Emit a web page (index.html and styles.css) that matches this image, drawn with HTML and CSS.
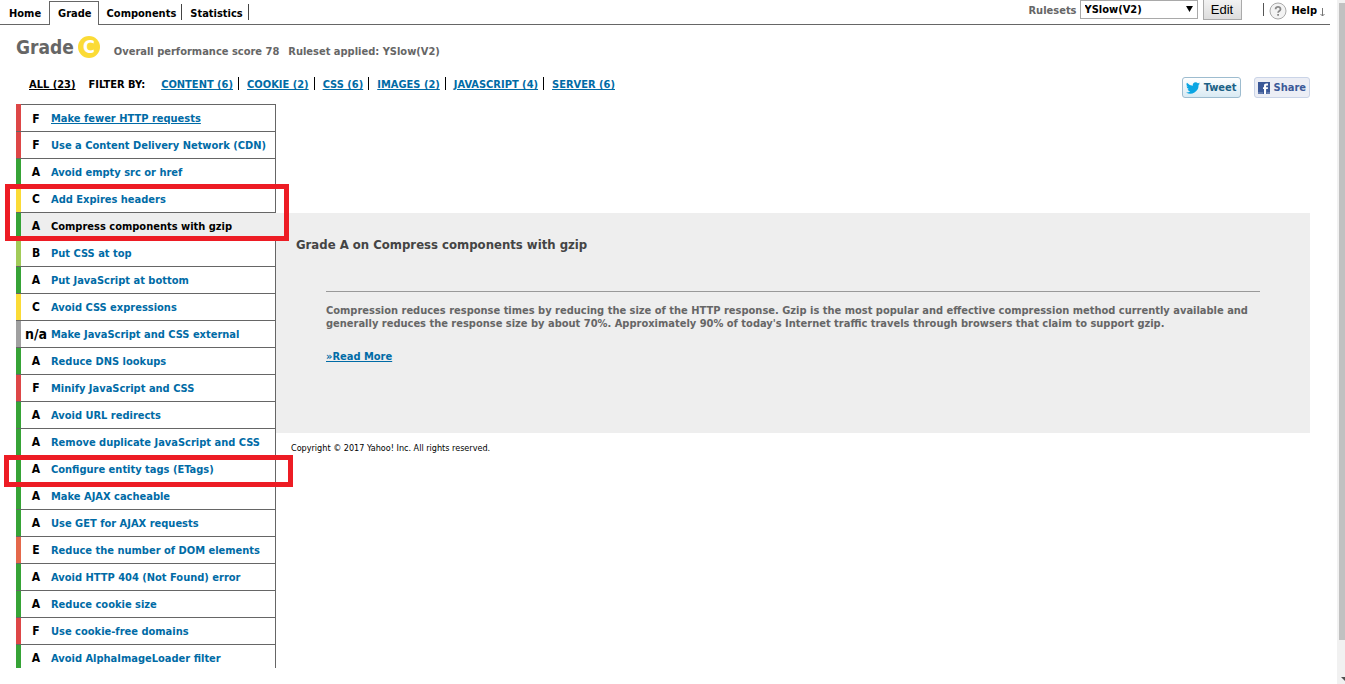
FILE: index.html
```html
<!DOCTYPE html>
<html lang="en">
<head>
<meta charset="utf-8">
<title>YSlow</title>
<link rel="stylesheet" href="styles.css">
</head>
<body>
<div class="page">
  <header class="topbar">
    <nav class="tabs">
      <a class="tab" href="#home">Home</a>
      <a class="tab tab-active" href="#grade">Grade</a>
      <a class="tab tab-divided" href="#components">Components</a>
      <a class="tab tab-divided" href="#statistics">Statistics</a>
    </nav>
    <form class="tools">
      <label for="rulesets">Rulesets</label>
      <span class="select-wrap">
        <select id="rulesets"><option>YSlow(V2)</option></select>
        <svg class="caret" viewBox="0 0 8 7" aria-hidden="true"><path d="M0 0h8L4 7z"/></svg>
      </span>
      <button class="edit" type="button">Edit</button>
      <a class="help" href="#help">
        <svg class="help-icon" viewBox="0 0 18 18" aria-hidden="true"><circle cx="9" cy="9" r="8"/><path d="M6.6 7.2c0-3.1 4.9-3.1 4.9 0 0 1.800-2.400 1.800-2.400 3.600M9.100 12.100v1.700"/></svg>
        <span>Help</span>
        <svg class="help-arrow" viewBox="0 0 5 9" aria-hidden="true"><path d="M2.500 0v8M.5 6l2 2 2-2"/></svg>
      </a>
    </form>
  </header>

  <section class="summary">
    <h1>Grade</h1>
    <span class="badge">C</span>
    <p class="score">Overall performance score 78</p>
    <p>Ruleset applied: YSlow(V2)</p>
  </section>

  <section class="filterbar">
    <nav class="filters">
      <a class="filter-all" href="#all">ALL (23)</a>
      <span class="filter-label">FILTER BY:</span>
      <a href="#content">CONTENT (6)</a><i></i>
      <a href="#cookie">COOKIE (2)</a><i></i>
      <a href="#css">CSS (6)</a><i></i>
      <a href="#images">IMAGES (2)</a><i></i>
      <a href="#javascript">JAVASCRIPT (4)</a><i></i>
      <a href="#server">SERVER (6)</a>
    </nav>
    <div class="share">
      <a class="share-btn tweet" href="#tweet"><svg viewBox="0 0 24 20" aria-hidden="true"><path fill="#0aa5e3" d="M24 2.400a10 10 0 0 1-2.800.8A5 5 0 0 0 23.300.5a10 10 0 0 1-3.100 1.200 4.900 4.900 0 0 0-8.400 4.500A14 14 0 0 1 1.700 1a4.900 4.900 0 0 0 1.500 6.600A5 5 0 0 1 1 7a4.900 4.900 0 0 0 3.900 4.900 5 5 0 0 1-2.200.1 4.900 4.900 0 0 0 4.600 3.400A10 10 0 0 1 0 17.500 14 14 0 0 0 21.500 5a10 10 0 0 0 2.500-2.600z"/></svg>Tweet</a>
      <a class="share-btn fb" href="#share"><svg viewBox="0 0 12 12" aria-hidden="true"><path fill="#3b5998" d="M0 0h12v12H0z"/><path fill="#fff" d="M6 12V7H5V5.200h1V4c0-1.600.8-2.400 2.300-2.400H10v1.800H9c-.7 0-.9.200-.9.800v1H10L9.800 7H8.100v5z"/><path fill="#8b9dc3" d="M0 10.500h5v1H0zM9 10.500h3v1H9z"/></svg>Share</a>
    </div>
  </section>

  <main class="results">
    <ul class="rules">
      <li class="f"><b>F</b><a class="hovered" href="#r1">Make fewer HTTP requests</a></li>
      <li class="f"><b>F</b><a href="#r2">Use a Content Delivery Network (CDN)</a></li>
      <li class="a"><b>A</b><a href="#r3">Avoid empty src or href</a></li>
      <li class="c"><b>C</b><a href="#r4">Add Expires headers</a></li>
      <li class="a selected"><b>A</b><a href="#r5">Compress components with gzip</a></li>
      <li class="b"><b>B</b><a href="#r6">Put CSS at top</a></li>
      <li class="a"><b>A</b><a href="#r7">Put JavaScript at bottom</a></li>
      <li class="c"><b>C</b><a href="#r8">Avoid CSS expressions</a></li>
      <li class="na"><b>n/a</b><a href="#r9">Make JavaScript and CSS external</a></li>
      <li class="a"><b>A</b><a href="#r10">Reduce DNS lookups</a></li>
      <li class="f"><b>F</b><a href="#r11">Minify JavaScript and CSS</a></li>
      <li class="a"><b>A</b><a href="#r12">Avoid URL redirects</a></li>
      <li class="a"><b>A</b><a href="#r13">Remove duplicate JavaScript and CSS</a></li>
      <li class="a"><b>A</b><a href="#r14">Configure entity tags (ETags)</a></li>
      <li class="a"><b>A</b><a href="#r15">Make AJAX cacheable</a></li>
      <li class="a"><b>A</b><a href="#r16">Use GET for AJAX requests</a></li>
      <li class="e"><b>E</b><a href="#r17">Reduce the number of DOM elements</a></li>
      <li class="a"><b>A</b><a href="#r18">Avoid HTTP 404 (Not Found) error</a></li>
      <li class="a"><b>A</b><a href="#r19">Reduce cookie size</a></li>
      <li class="f"><b>F</b><a href="#r20">Use cookie-free domains</a></li>
      <li class="a"><b>A</b><a href="#r21">Avoid AlphaImageLoader filter</a></li>
    </ul>
    <div class="detail">
      <article class="panel">
        <h2>Grade A on Compress components with gzip</h2>
        <div class="explain">
          <p>Compression reduces response times by reducing the size of the HTTP response. Gzip is the most popular and effective compression method currently available and generally reduces the response size by about 70%. Approximately 90% of today's Internet traffic travels through browsers that claim to support gzip.</p>
          <a href="#more">»Read More</a>
        </div>
      </article>
      <footer>Copyright © 2017 Yahoo! Inc. All rights reserved.</footer>
    </div>
    <div class="mark mark-gzip"></div>
    <div class="mark mark-etags"></div>
  </main>
</div>
<div class="scrollbar"><div class="thumb"></div><svg viewBox="0 0 4 4" aria-hidden="true"><path d="M0 0h4v4z"/></svg></div>
</body>
</html>
```
FILE: styles.css
```css
* { box-sizing: border-box; }
body {
  margin: 0;
  height: 100vh;
  display: flex;
  overflow: hidden;
  background: #fff;
  color: #000;
  font: bold 11px/13px "DejaVu Sans Condensed", "DejaVu Sans", sans-serif;
}
h1, h2, p, ul { margin: 0; padding: 0; }
a { color: #006ba6; }
.page { flex: 1; min-width: 0; display: flex; flex-direction: column; padding-bottom: 16px; }

.topbar {
  display: flex;
  justify-content: space-between;
  height: 25px;
  margin-right: 7px;
  border-bottom: 1px solid #666;
}
.tabs { display: flex; padding-top: 1px; }
.tab { position: relative; padding: 6px 8px 0 9px; height: 23px; color: #000; text-decoration: none; }
.tab-active { height: 24px; padding: 5px 6px 0 8px; border: 1px solid #666; border-bottom: 0; background: #fff; box-shadow: 0 1px #fff; }
.tab-divided { padding: 6px 6px 0 8px; }
.tab-divided::after { content: ""; position: absolute; right: 0; top: 3px; height: 16px; border-right: 1px solid #444; }
.tools { display: flex; align-items: flex-start; color: #666; }
.tools label { padding: 4px 3px 0 0; }
.select-wrap { position: relative; }
.tools select {
  appearance: none;
  display: block;
  width: 118px;
  height: 19px;
  padding: 0 4px;
  border: 1px solid #a9a9a9;
  border-radius: 0;
  background: #fff;
  color: #000;
  font: inherit;
}
.caret { position: absolute; right: 5px; top: 6px; width: 7px; height: 6px; }
.edit {
  width: 39px;
  height: 20px;
  margin: 0 21px 0 5px;
  padding: 0;
  border: 1px solid #aaa;
  border-top: 0;
  background: linear-gradient(#f2f2f2, #ddd);
  color: #000;
  font: 13px/18px "Liberation Sans", Arial, sans-serif;
}
.help { display: flex; align-items: flex-start; color: #000; text-decoration: none; }
.help::before { content: ""; height: 13px; margin: 3px 5px 0 0; border-left: 1px solid #555; }
.help span { padding: 4px 3px 0 5px; }
.help-icon { width: 18px; height: 18px; margin-top: 2px; fill: #f3f3f3; stroke: #aaa; }
.help-icon path { fill: none; stroke: #888; stroke-width: 1.800; }
.help-arrow { width: 5px; height: 9px; margin: 8px 5px 0 0; fill: none; stroke: #777; }

.summary { display: flex; align-items: center; height: 44px; padding-left: 16px; color: #666; }
.summary h1 { font-size: 19px; line-height: 24px; }
.badge { width: 22px; height: 22px; margin: 0 14px 0 4px; border-radius: 50%; background: #fbdb36; color: #fff; text-align: center; font-size: 18px; line-height: 22px; }
.summary p { padding-top: 8px; }
.score { margin-right: 9px; }

.filterbar { display: flex; justify-content: space-between; height: 35px; padding: 8px 27px 0 29px; }
.filters { display: flex; align-items: flex-start; }
.filters a, .filter-label { padding-top: 1px; margin-right: 5px; }
.filters .filter-all { color: #000; margin-right: 13px; }
.filters .filter-label { margin-right: 16px; }
.filters i { height: 13px; margin-right: 8px; border-left: 1px solid #000; }
.share { display: flex; gap: 13px; }
.share-btn { display: flex; align-items: center; gap: 4px; height: 21px; padding: 0 3px; border: 1px solid #bcd; border-radius: 3px; text-decoration: none; }
.tweet { border-color: #9dbccf; background: linear-gradient(#fff, #d9eaf3); color: #1b6186; }
.tweet svg { width: 14px; height: 12px; }
.fb { border-color: #cad4e7; background: #eceef5; color: #3b5998; }
.fb svg { width: 12px; height: 12px; }

.results { position: relative; flex: 1; min-height: 0; display: flex; padding-left: 16px; }
.rules { width: 260px; overflow: hidden; list-style: none; }
.rules li { --grade: #36a336; display: flex; align-items: center; height: 27px; border-bottom: 1px solid #666; }
.rules li::before { content: ""; width: 5px; align-self: stretch; background: var(--grade); }
.rules .b { --grade: #a2cb58; }
.rules .c { --grade: #fbdb36; }
.rules .e { --grade: #e4684a; }
.rules .f { --grade: #dd4646; }
.rules .na { --grade: #a0a0a0; }
.rules li:first-child { height: 28px; }
.rules b { width: 30px; text-align: center; font-size: 12px; }
.rules .na b { font-size: 14px; }
.rules a { flex: 1; height: 26px; line-height: 28px; border-right: 1px solid #666; text-decoration: none; }
.rules li:first-child b, .rules li:first-child a { height: 27px; line-height: 28px; border-top: 1px solid #666; }
.rules .hovered { text-decoration: underline; }
.rules .selected { background: #eee; }
.rules .selected a { border-right-color: #eee; color: #000; }

.detail { flex: 1; min-width: 0; padding: 109px 27px 0 0; }
.panel { min-height: 220px; padding: 24px 50px 0 20px; background: #eee; color: #666; }
.panel h2 { color: #444; font-size: 13px; line-height: 16px; }
.explain { margin: 38px 0 0 30px; padding-top: 12px; border-top: 1px solid #999; }
.explain p { margin-bottom: 20px; }
footer { padding: 9px 15px; font-size: 9px; font-weight: normal; }

/* Highlights over the list */
.mark { position: absolute; border: 5px solid #ed1c24; }
.mark-gzip { left: 5px; top: 80px; width: 284px; height: 57px; }
.mark-etags { left: 4px; top: 351px; width: 289px; height: 32px; }

.scrollbar { width: 8px; display: flex; flex-direction: column; justify-content: space-between; padding: 3px 0 3px 2px; background: #f1f1f1; }
.thumb { height: 94%; background: #c1c1c1; }
.scrollbar svg { width: 4px; height: 4px; align-self: flex-end; fill: #505050; }
```
